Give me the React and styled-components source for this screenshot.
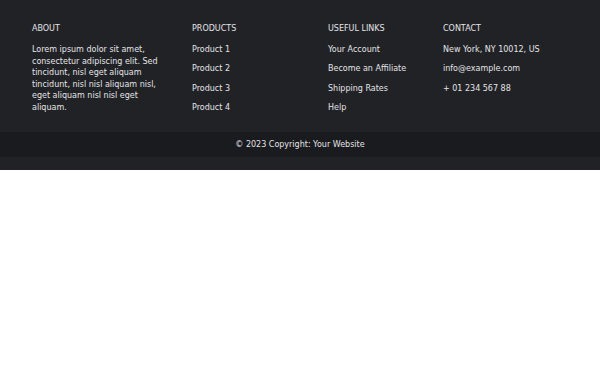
import React from 'react';
import styled, { createGlobalStyle } from 'styled-components';

const GlobalStyle = createGlobalStyle`
  body {
    margin: 0;
    background: #ffffff;
    font-family: "DejaVu Sans", sans-serif;
  }
`;

const Footer = styled.footer`
  background-color: #212226;
  color: #e4e4e6;
  font-size: 8px;
  line-height: 1.45;
  padding-bottom: 13px;
`;

const Columns = styled.div`
  display: grid;
  grid-template-columns: 160px 136px 115px 1fr;
  padding: 23px 32px 18.4px;
`;

const Column = styled.div`
  display: flex;
  flex-direction: column;
  gap: 7.7px;
`;

const Heading = styled.h6`
  margin: 0 0 1.3px;
  font-size: 8px;
  font-weight: normal;
  text-transform: uppercase;
  line-height: 12px;
`;

const Text = styled.p`
  margin: 0;
  max-width: 132px;
`;

const Item = styled.p`
  margin: 0;
`;

const Bar = styled.div`
  background-color: #1a1b1e;
  height: 25px;
  display: flex;
  align-items: center;
  justify-content: center;
`;

const sections = [
  { title: 'Products', items: ['Product 1', 'Product 2', 'Product 3', 'Product 4'] },
  { title: 'Useful links', items: ['Your Account', 'Become an Affiliate', 'Shipping Rates', 'Help'] },
  { title: 'Contact', items: ['New York, NY 10012, US', 'info@example.com', '+ 01 234 567 88'] },
];

const App = () => {
  return (
    <>
      <GlobalStyle />
      <Footer>
        <Columns>
          <Column>
            <Heading>About</Heading>
            <Text>
              Lorem ipsum dolor sit amet, consectetur adipiscing elit. Sed tincidunt, nisl eget aliquam
              tincidunt, nisl nisl aliquam nisl, eget aliquam nisl nisl eget aliquam.
            </Text>
          </Column>
          {sections.map(s => (
            <Column key={s.title}>
              <Heading>{s.title}</Heading>
              {s.items.map(i => <Item key={i}>{i}</Item>)}
            </Column>
          ))}
        </Columns>
        <Bar>© 2023 Copyright: Your Website</Bar>
      </Footer>
    </>
  );
};

export default App;
